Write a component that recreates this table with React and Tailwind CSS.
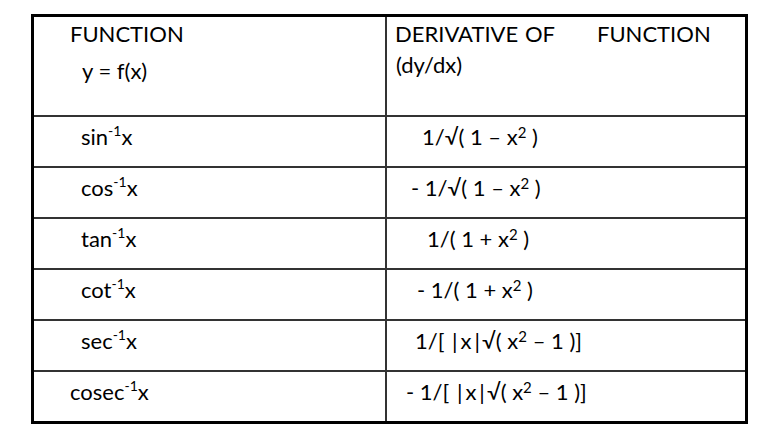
const Sq = () => <sup className="relative top-[1px] text-[15px] leading-none align-super">2</sup>;
const Abs = () => (
  <span className="pl-[2px] pr-[2px]">
    |<span className="px-[3px]">x</span>|
  </span>
);

const rows = [
  { fn: 'sin', fnPad: 'pl-[47px]', d: <>1/√( 1 – x<Sq /> )</>, dPad: 'pl-[35px]' },
  { fn: 'cos', fnPad: 'pl-[47px]', d: <>- 1/√( 1 – x<Sq /> )</>, dPad: 'pl-[24px]' },
  { fn: 'tan', fnPad: 'pl-[47px]', d: <>1/( 1 + x<Sq /> )</>, dPad: 'pl-[40px]' },
  { fn: 'cot', fnPad: 'pl-[47px]', d: <>- 1/( 1 + x<Sq /> )</>, dPad: 'pl-[30px]' },
  { fn: 'sec', fnPad: 'pl-[47px]', d: <>1/[ <Abs />√( x<Sq /> – 1 )]</>, dPad: 'pl-[28px]' },
  { fn: 'cosec', fnPad: 'pl-[36px]', d: <>- 1/[ <Abs />√( x<Sq /> – 1 )]</>, dPad: 'pl-[19px]' },
];

function Inverse({ name }) {
  return (
    <span>
      {name}
      <sup className="relative top-[-1px] text-[14px] leading-none align-super">-1</sup>x
    </span>
  );
}

export default function App() {
  return (
    <div className="w-[768px] h-[438px] bg-white pt-[14px] pl-[31px] text-[22px] leading-[26px] text-black" style={{ fontFamily: 'Lato, "Open Sans", sans-serif' }}>
      <div className="w-[717px] border-[3px] border-black">
        {/* header */}
        <div className="flex h-[98px]">
          <div className="w-[353px] shrink-0 border-r-2 border-[#333]">
            <div className="pt-[4px] pl-[36px]">FUNCTION</div>
            <div className="mt-[11px] pl-[48px]">y = f(x)</div>
          </div>
          <div className="flex-1">
            <div className="pt-[4px] pl-[8px] flex">
              <span className="w-[130px] shrink-0">DERIVATIVE</span>
              <span className="w-[72px] shrink-0">OF</span>
              <span>FUNCTION</span>
            </div>
            <div className="mt-[5px] pl-[9px]">(dy/dx)</div>
          </div>
        </div>

        {rows.map((r) => (
          <div key={r.fn} className="flex h-[51px] border-t-2 border-[#333]">
            <div className={`w-[353px] shrink-0 border-r-2 border-[#333] pt-[7px] ${r.fnPad}`}>
              <Inverse name={r.fn} />
            </div>
            <div className={`flex-1 pt-[7px] whitespace-pre ${r.dPad}`}>{r.d}</div>
          </div>
        ))}
      </div>
    </div>
  );
}
